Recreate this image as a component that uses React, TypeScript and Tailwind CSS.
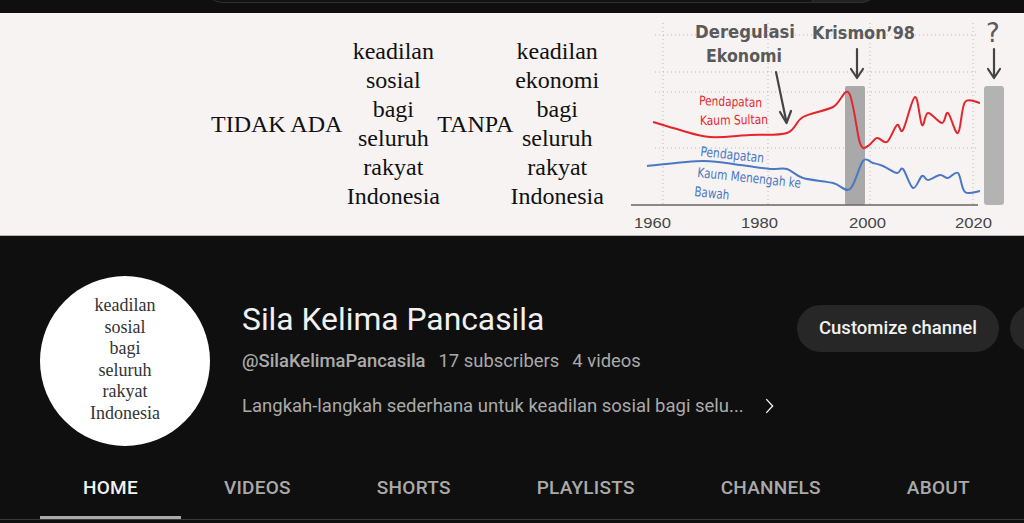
import React from 'react'

const red = [
  [653, 122], [680, 130], [710, 137], [750, 135], [787, 133], [803, 117], [833, 107], [849, 93],
  [860, 143], [868, 146], [877, 138], [887, 142], [897, 125], [903, 130], [915, 97], [922, 125],
  [928, 113], [942, 123], [948, 113], [958, 133], [965, 102], [980, 103],
]

const blue = [
  [647, 166], [703, 161], [740, 165], [770, 169], [787, 169], [803, 178], [833, 183], [850, 189],
  [863, 161], [873, 163], [883, 166], [897, 173], [903, 169], [913, 188], [922, 176], [928, 180],
  [940, 175], [948, 178], [958, 173], [965, 192], [980, 191],
]

function smooth(pts: number[][]) {
  let d = `M${pts[0][0]} ${pts[0][1]}`
  for (let i = 1; i < pts.length; i++) {
    const p0 = pts[i - 2] || pts[i - 1]
    const p1 = pts[i - 1]
    const p2 = pts[i]
    const p3 = pts[i + 1] || p2
    const c1x = p1[0] + (p2[0] - p0[0]) / 6
    const c1y = p1[1] + (p2[1] - p0[1]) / 6
    const c2x = p2[0] - (p3[0] - p1[0]) / 6
    const c2y = p2[1] - (p3[1] - p1[1]) / 6
    d += ` C${c1x} ${c1y} ${c2x} ${c2y} ${p2[0]} ${p2[1]}`
  }
  return d
}

function Chart() {
  const hand = { fontFamily: '"DejaVu Sans", sans-serif', fontWeight: 700 }
  const cond = { fontFamily: '"DejaVu Sans Condensed", "DejaVu Sans", sans-serif' }
  return (
    <svg viewBox="620 13 404 223" className="w-[404px] h-[223px] shrink-0">
      <g stroke="#b9b9b9" strokeWidth="1" strokeDasharray="1 3">
        {[663, 768, 870, 973].map((x) => (
          <line key={x} x1={x} y1={23} x2={x} y2={205} />
        ))}
        {[35, 72, 92, 148].map((y) => (
          <line key={y} x1={655} y1={y} x2={978} y2={y} />
        ))}
      </g>
      <rect x="845" y="86" width="20" height="119" rx="2" fill="#a9a9a9" />
      <rect x="984" y="86" width="20" height="119" rx="3" fill="#b3b3b3" />
      <line x1="631" y1="205" x2="978" y2="205" stroke="#666" strokeWidth="1.3" />
      <path d={smooth(red)} fill="none" stroke="#e5252c" strokeWidth="2" />
      <path d={smooth(blue)} fill="none" stroke="#4a78c2" strokeWidth="2" />

      <g fill="#5a5a5a" style={hand}>
        <text x="695" y="38" fontSize="17" textLength="100" lengthAdjust="spacingAndGlyphs">Deregulasi</text>
        <text x="706" y="62" fontSize="17" textLength="76" lengthAdjust="spacingAndGlyphs">Ekonomi</text>
        <text x="812" y="39" fontSize="17" textLength="103" lengthAdjust="spacingAndGlyphs">Krismon’98</text>
        <text x="986" y="42" fontSize="26" fontWeight={400}>?</text>
      </g>
      <g stroke="#444" strokeWidth="2.2" fill="none" strokeLinecap="round" strokeLinejoin="round">
        <line x1="776" y1="72" x2="786" y2="120" />
        <path d="M780 112 L786.5 123 L791 111" />
        <line x1="857" y1="49" x2="857" y2="76" />
        <path d="M851 69 L857 78 L863 69" />
        <line x1="994" y1="49" x2="994" y2="76" />
        <path d="M988 69 L994 78 L1000 69" />
      </g>

      <g fill="#e5252c" style={cond} fontSize="13">
        <text x="699" y="105" textLength="63" lengthAdjust="spacingAndGlyphs" transform="rotate(2 699 105)">Pendapatan</text>
        <text x="700" y="125" textLength="68" lengthAdjust="spacingAndGlyphs" transform="rotate(-1 700 125)">Kaum Sultan</text>
      </g>
      <g fill="#4a78c2" style={cond} fontSize="13.5">
        <text x="700" y="156" textLength="64" lengthAdjust="spacingAndGlyphs" transform="rotate(6 700 156)">Pendapatan</text>
        <text x="697" y="177" textLength="104" lengthAdjust="spacingAndGlyphs" transform="rotate(6 697 177)">Kaum Menengah ke</text>
        <text x="694" y="196" textLength="35" lengthAdjust="spacingAndGlyphs" transform="rotate(6 694 196)">Bawah</text>
      </g>

      <g fill="#444" fontFamily='"Liberation Sans", sans-serif' fontSize="15">
        <text x="634" y="228" textLength="37" lengthAdjust="spacingAndGlyphs">1960</text>
        <text x="741" y="228" textLength="37" lengthAdjust="spacingAndGlyphs">1980</text>
        <text x="849" y="228" textLength="37" lengthAdjust="spacingAndGlyphs">2000</text>
        <text x="955" y="228" textLength="37" lengthAdjust="spacingAndGlyphs">2020</text>
      </g>
    </svg>
  )
}

function Column({ words }: { words: string[] }) {
  return (
    <div className="w-[92px] flex flex-col items-center leading-[29px]">
      {words.map((w) => (
        <span key={w} className="whitespace-nowrap">{w}</span>
      ))}
    </div>
  )
}

const tabs = ['HOME', 'VIDEOS', 'SHORTS', 'PLAYLISTS', 'CHANNELS', 'ABOUT']

export default function App() {
  return (
    <div className="w-[1024px] h-[523px] overflow-hidden bg-[#0f0f0f] font-['Roboto',sans-serif]">
      {/* top bar with search box edge */}
      <div className="h-[13px] flex pl-[203px]">
        <div className="flex h-[40px] -mt-[37px]">
          <div className="w-[610px] border border-[#303030] rounded-l-full bg-[#121212]" />
          <div className="w-[67px] border border-[#303030] border-l-0 rounded-r-full bg-[#222]" />
        </div>
      </div>

      {/* banner */}
      <div className="h-[223px] bg-[#f7f3f3] border-b border-[#b5b3b3] flex items-center text-[#111] font-['Liberation_Serif',serif] text-[24px]">
        <div className="flex items-center pl-[211px] w-[620px]">
          <span className="whitespace-nowrap">TIDAK ADA</span>
          <div className="ml-[5px]">
            <Column words={['keadilan', 'sosial', 'bagi', 'seluruh', 'rakyat', 'Indonesia']} />
          </div>
          <span className="whitespace-nowrap -ml-[2px]">TANPA</span>
          <div className="-ml-[2px]">
            <Column words={['keadilan', 'ekonomi', 'bagi', 'seluruh', 'rakyat', 'Indonesia']} />
          </div>
        </div>
        <Chart />
      </div>

      {/* channel header */}
      <div className="flex items-start pl-[40px] pt-[40px]">
        <div className="w-[170px] h-[170px] rounded-full bg-white shrink-0 flex flex-col items-center justify-center font-['Liberation_Serif',serif] text-[18px] leading-[21.5px] text-[#333] pb-[3px]">
          <span>keadilan</span>
          <span>sosial</span>
          <span>bagi</span>
          <span>seluruh</span>
          <span>rakyat</span>
          <span>Indonesia</span>
        </div>
        <div className="ml-[32px] w-[555px] shrink-0 pt-[23px]">
          <h1 className="text-[31.8px] leading-[40px] text-[#f1f1f1] whitespace-nowrap">Sila Kelima Pancasila</h1>
          <div className="mt-[10px] flex gap-[13px] text-[18.4px] leading-[24px] text-[#aaa] whitespace-nowrap">
            <span className="font-medium">@SilaKelimaPancasila</span>
            <span>17 subscribers</span>
            <span>4 videos</span>
          </div>
          <div className="mt-[21px] flex items-center text-[18.5px] leading-[24px] text-[#aaa]">
            <span className="whitespace-nowrap">Langkah-langkah sederhana untuk keadilan sosial bagi selu...</span>
            <svg viewBox="0 0 24 24" className="w-[22px] h-[22px] ml-[14px] shrink-0" fill="none" stroke="#f1f1f1" strokeWidth="1.5">
              <path d="M9 4.5l7 7.5-7 7.5" />
            </svg>
          </div>
        </div>
        <div className="flex gap-[11px] shrink-0 mt-[29px]">
          <button className="h-[47px] px-[22px] rounded-full bg-[#272727] text-[#f1f1f1] text-[18.5px] font-medium whitespace-nowrap">
            Customize channel
          </button>
          <button className="h-[47px] px-[22px] rounded-full bg-[#272727] text-[#f1f1f1] text-[18.5px] font-medium whitespace-nowrap">
            Manage videos
          </button>
        </div>
      </div>

      {/* tabs */}
      <div className="mt-[16px] border-b border-[#3a3a3a] pl-[40px] flex">
        {tabs.map((t, i) => (
          <div
            key={t}
            className={
              'h-[57px] px-[43px] pb-[2px] flex items-center text-[19px] font-medium tracking-[0.25px] whitespace-nowrap ' +
              (i === 0 ? 'text-[#f1f1f1] border-b-[3px] border-[#aaa]' : 'text-[#aaa] border-b-[3px] border-transparent')
            }
          >
            {t}
          </div>
        ))}
      </div>
    </div>
  )
}
